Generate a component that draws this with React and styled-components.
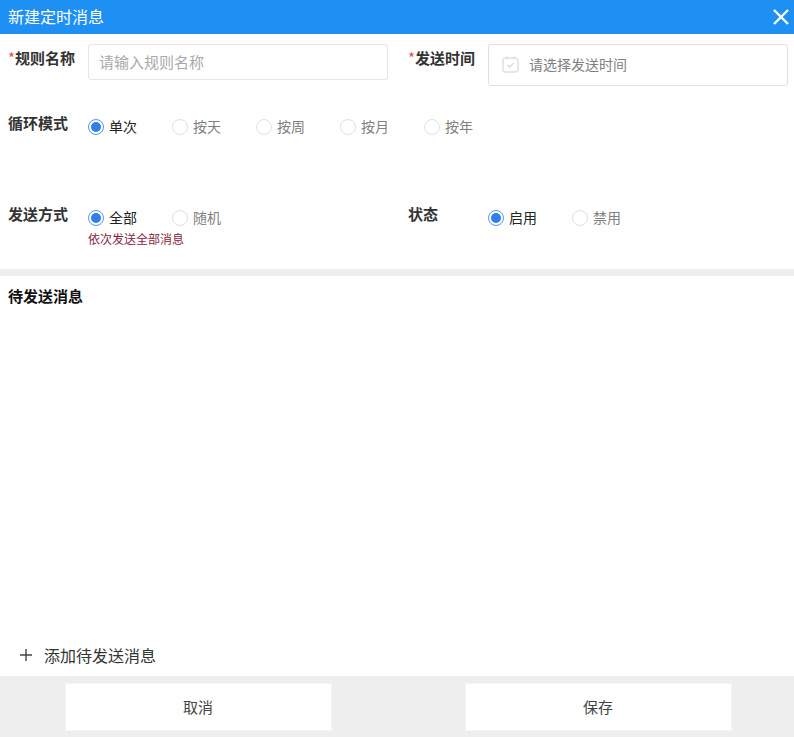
import React from "react";
import styled, { createGlobalStyle } from "styled-components";

const GlobalStyle = createGlobalStyle`
  html, body {
    margin: 0;
    padding: 0;
    background: #fff;
    font-family: "Noto Sans CJK SC", "Liberation Sans", sans-serif;
  }
  * {
    box-sizing: border-box;
  }
`;

const Dialog = styled.div`
  display: flex;
  flex-direction: column;
  width: 794px;
  height: 737px;
  overflow: hidden;
  background: #fff;
`;

const TitleBar = styled.header`
  display: flex;
  flex: none;
  align-items: center;
  justify-content: space-between;
  height: 34px;
  padding: 0 4px 2px 8px;
  background: #1e90f3;
  color: #fff;
  font-size: 16px;
`;

const Close = styled.button`
  display: flex;
  margin-top: 2px;
  padding: 0;
  border: 0;
  background: none;
  color: #fff;
`;

const Form = styled.section`
  display: flex;
  flex: none;
  flex-direction: column;
  height: 242px;
  padding: 10px 0 0 8px;
  border-bottom: 7px solid #eeeeee;
`;

const Row = styled.div`
  display: flex;
  height: ${(p) => p.$height}px;
`;

const Field = styled.div`
  display: flex;
  flex: ${(p) => (p.$wide ? "1" : "none")};
  width: ${(p) => (p.$wide ? "auto" : "400px")};
`;

const Label = styled.label`
  flex: none;
  width: 80px;
  padding-top: ${(p) => p.$top || 0}px;
  color: #333;
  font-size: 15px;
  font-weight: 700;
  line-height: 20px;
`;

const Star = styled.span`
  color: #d9534f;
  font-weight: 400;
`;

const TextInput = styled.input`
  width: 300px;
  height: 36px;
  padding: 0 10px 2px;
  border: 1px solid #e6e6ea;
  border-radius: 3px;
  outline: none;
  font-family: inherit;
  font-size: 15px;

  &::placeholder {
    color: #a9a9a9;
  }
`;

const DatePicker = styled.div`
  display: flex;
  align-items: center;
  gap: 10px;
  width: 300px;
  height: 42px;
  padding: 0 0 2px 13px;
  border: 1px solid #dedee4;
  border-radius: 3px;
  color: #808080;
  font-size: 14px;
`;

const Stack = styled.div`
  display: flex;
  flex-direction: column;
`;

const RadioGroup = styled.div`
  display: flex;
  padding-top: ${(p) => p.$top || 0}px;
`;

const RadioItem = styled.div`
  display: flex;
  align-items: center;
  gap: 5px;
  width: 84px;
  height: 20px;
  color: ${(p) => (p.$checked ? "#222" : "#808080")};
  font-size: 14px;
`;

const RadioText = styled.span`
  padding-bottom: 2px;
`;

const RadioMark = styled.span`
  display: flex;
  flex: none;
  align-items: center;
  justify-content: center;
  width: 16px;
  height: 16px;
  border: 1px solid ${(p) => (p.$checked ? "#5b93ea" : "#dfe0e6")};
  border-radius: 50%;
  background: #fff;

  &::after {
    content: "";
    display: ${(p) => (p.$checked ? "block" : "none")};
    width: 10px;
    height: 10px;
    border-radius: 50%;
    background: #2f7fe8;
  }
`;

const Hint = styled.div`
  margin-top: 4px;
  color: #8b1a3d;
  font-size: 12px;
  line-height: 14px;
`;

const Messages = styled.section`
  display: flex;
  flex: 1;
  flex-direction: column;
  justify-content: space-between;
  padding: 10px 8px 10px;
`;

const MessagesTitle = styled.h2`
  margin: 0;
  color: #111;
  font-size: 15px;
  font-weight: 700;
  line-height: 20px;
`;

const AddButton = styled.button`
  display: flex;
  align-items: center;
  gap: 12px;
  padding: 0 0 0 12px;
  border: 0;
  background: none;
  color: #333;
  font-family: inherit;
  font-size: 16px;
  line-height: 22px;
`;

const Footer = styled.footer`
  display: flex;
  flex: none;
  justify-content: center;
  gap: 133px;
  height: 61px;
  padding: 7px 0 0 3px;
  background: #eeeeee;
`;

const FooterButton = styled.button`
  width: 267px;
  height: 48px;
  padding: 0 1px 2px 0;
  border: 1px solid #f4f4f4;
  background: #fff;
  color: #444;
  font-family: inherit;
  font-size: 15px;
`;

const Radios = ({ options, top }) => (
  <RadioGroup $top={top}>
    {options.map((text, i) => (
      <RadioItem key={text} $checked={i === 0}>
        <RadioMark $checked={i === 0} />
        <RadioText>{text}</RadioText>
      </RadioItem>
    ))}
  </RadioGroup>
);

const App = () => {
  return (
    <Dialog>
      <GlobalStyle />
      <TitleBar>
        新建定时消息
        <Close aria-label="关闭">
          <svg width="18" height="18" viewBox="0 0 18 18" fill="none" stroke="currentColor" strokeWidth="2.4">
            <path d="M2 2l14 14M16 2L2 16" />
          </svg>
        </Close>
      </TitleBar>
      <Form>
        <Row $height={69}>
          <Field>
            <Label $top={4}>
              <Star>*</Star>规则名称
            </Label>
            <TextInput placeholder="请输入规则名称" />
          </Field>
          <Field $wide>
            <Label $top={4}>
              <Star>*</Star>发送时间
            </Label>
            <DatePicker>
              <svg width="17" height="17" viewBox="0 0 17 17" fill="none" stroke="#e0e0e0" strokeWidth="1.5">
                <rect x="1" y="2" width="15" height="14" rx="3" />
                <path d="M5 0.5v3M12 0.5v3" />
                <path d="M5.5 9l2.2 2.2 3.8-4" stroke="#d4d4d4" strokeWidth="1.2" />
              </svg>
              请选择发送时间
            </DatePicker>
          </Field>
        </Row>
        <Row $height={91}>
          <Field $wide>
            <Label>循环模式</Label>
            <Radios options={["单次", "按天", "按周", "按月", "按年"]} top={4} />
          </Field>
        </Row>
        <Row $height={62}>
          <Field>
            <Label>发送方式</Label>
            <Stack>
              <Radios options={["全部", "随机"]} top={4} />
              <Hint>依次发送全部消息</Hint>
            </Stack>
          </Field>
          <Field $wide>
            <Label>状态</Label>
            <Radios options={["启用", "禁用"]} top={4} />
          </Field>
        </Row>
      </Form>
      <Messages>
        <MessagesTitle>待发送消息</MessagesTitle>
        <AddButton>
          <svg width="12" height="12" viewBox="0 0 12 12" fill="none" stroke="#444" strokeWidth="1.4">
            <path d="M6 0v12M0 6h12" />
          </svg>
          添加待发送消息
        </AddButton>
      </Messages>
      <Footer>
        <FooterButton>取消</FooterButton>
        <FooterButton>保存</FooterButton>
      </Footer>
    </Dialog>
  );
};

export default App;
